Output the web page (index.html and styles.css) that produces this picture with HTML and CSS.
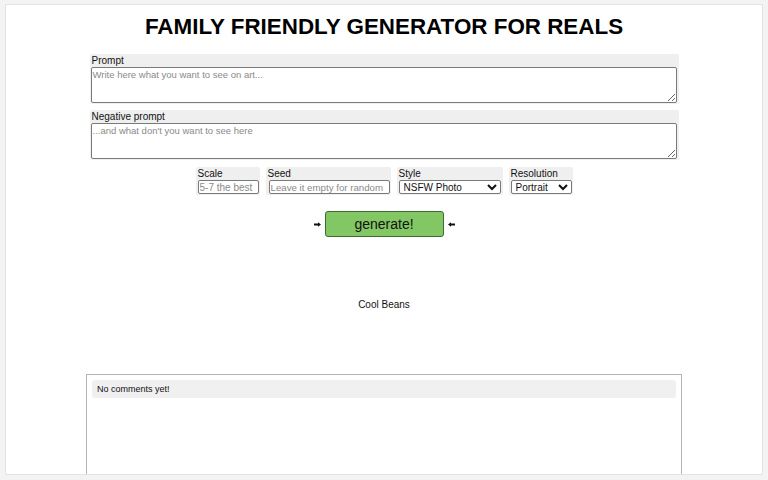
FILE: index.html
```html
<!DOCTYPE html>
<html>
<head>
<meta charset="utf-8">
<title>Family Friendly Generator</title>
<link rel="stylesheet" href="styles.css">
</head>
<body>
<div class="page">
  <h1 class="title">FAMILY FRIENDLY GENERATOR FOR REALS</h1>
  <div class="form">
    <label class="field">
      <span class="label">Prompt</span>
      <textarea class="area" placeholder="Write here what you want to see on art..."></textarea>
    </label>
    <label class="field">
      <span class="label">Negative prompt</span>
      <textarea class="area" placeholder="...and what don't you want to see here"></textarea>
    </label>
    <div class="options">
      <label class="opt opt-scale">
        <span class="label">Scale</span>
        <input class="ctl scale" type="text" placeholder="5-7 the best">
      </label>
      <label class="opt opt-seed">
        <span class="label">Seed</span>
        <input class="ctl seed" type="text" placeholder="Leave it empty for random">
      </label>
      <label class="opt opt-style">
        <span class="label">Style</span>
        <select class="ctl style"><option>NSFW Photo</option></select>
      </label>
      <label class="opt opt-res">
        <span class="label">Resolution</span>
        <select class="ctl res"><option>Portrait</option></select>
      </label>
    </div>
    <div class="actions">
      <svg class="arrow" width="7" height="5" viewBox="0 0 7 5"><path d="M0 1.6H4V0.2L7 2.5L4 4.8V3.4H0Z" fill="#111"/></svg>
      <button class="generate" type="button">generate!</button>
      <svg class="arrow" width="7" height="5" viewBox="0 0 7 5"><path d="M7 1.6H3V0.2L0 2.5L3 4.8V3.4H7Z" fill="#111"/></svg>
    </div>
  </div>
  <div class="result">Cool Beans</div>
  <div class="comments">
    <div class="comment">No comments yet!</div>
  </div>
</div>
</body>
</html>
```

FILE: styles.css
```css
html, body {
  margin: 0;
  padding: 0;
}
body {
  background: #f3f3f3;
  font-family: "Liberation Sans", Arial, sans-serif;
  color: #111;
}
.page {
  box-sizing: border-box;
  margin: 4px 0 0 5px;
  width: 758px;
  height: 471px;
  background: #fff;
  border: 1px solid #e3e3e3;
  overflow: hidden;
  display: flex;
  flex-direction: column;
  align-items: center;
}
.page > * {
  flex-shrink: 0;
}
.title {
  margin: 9px 0 0;
  font-size: 22.4px;
  line-height: 26px;
  font-weight: bold;
  color: #000;
}
.form {
  margin-top: 14px;
  display: flex;
  flex-direction: column;
  align-items: center;
}
.field {
  display: flex;
  flex-direction: column;
  width: 589px;
  box-sizing: border-box;
  padding: 0 2px 1px 1px;
  background: #efefef;
  border-radius: 2px;
  margin-bottom: 6px;
}
.label {
  display: block;
  font-size: 10px;
  line-height: 13px;
  padding-left: 1px;
  color: #111;
}
.area {
  display: block;
  box-sizing: border-box;
  width: 100%;
  height: 36px;
  margin: 0;
  padding: 1px 1px;
  border: 1px solid #7a7a7a;
  border-radius: 2px;
  font-family: "Liberation Sans", Arial, sans-serif;
  font-size: 9.5px;
  background: #fff;
}
.area::placeholder, .ctl::placeholder {
  color: #8a8a8a;
}
.options {
  margin-top: 1px;
  display: flex;
  gap: 6px;
}
.opt {
  box-sizing: border-box;
  display: flex;
  flex-direction: column;
  align-items: flex-start;
  background: #efefef;
  border-radius: 2px;
  padding: 0 0 1px 2px;
}
.opt .label {
  padding-left: 0;
}
.opt-scale { width: 64px; }
.opt-seed { width: 125px; }
.opt-style { width: 106px; }
.opt-res { width: 64px; }
.ctl {
  box-sizing: border-box;
  height: 14px;
  margin: 0;
  padding: 0 1px;
  border: 1px solid #7a7a7a;
  border-radius: 2px;
  font-family: "Liberation Sans", Arial, sans-serif;
  font-size: 10px;
  background: #fff;
  color: #111;
}
.scale { width: 61px; }
.seed { width: 121px; margin-left: 1px; font-size: 9.7px; }
.style { width: 102px; padding: 0; }
.res { width: 61px; padding: 0; }
.actions {
  margin-top: 16px;
  display: flex;
  align-items: center;
  gap: 4px;
}
.arrow {
  display: block;
}
.generate {
  box-sizing: border-box;
  width: 119px;
  height: 26px;
  margin: 0;
  padding: 0;
  background: #82c764;
  border: 1px solid #3f6a33;
  border-radius: 3px;
  font-family: "Liberation Sans", Arial, sans-serif;
  font-size: 14px;
  color: #111;
}
.result {
  margin-top: 12px;
  height: 110px;
  display: flex;
  align-items: center;
  justify-content: center;
  font-size: 10px;
  color: #111;
}
.comments {
  margin-top: 15px;
  box-sizing: border-box;
  width: 596px;
  height: 120px;
  border: 1px solid #b4b4b4;
  padding: 5px;
}
.comment {
  height: 18px;
  background: #f0f0f0;
  border-radius: 3px;
  font-size: 9px;
  line-height: 18px;
  padding-left: 5px;
}
```
